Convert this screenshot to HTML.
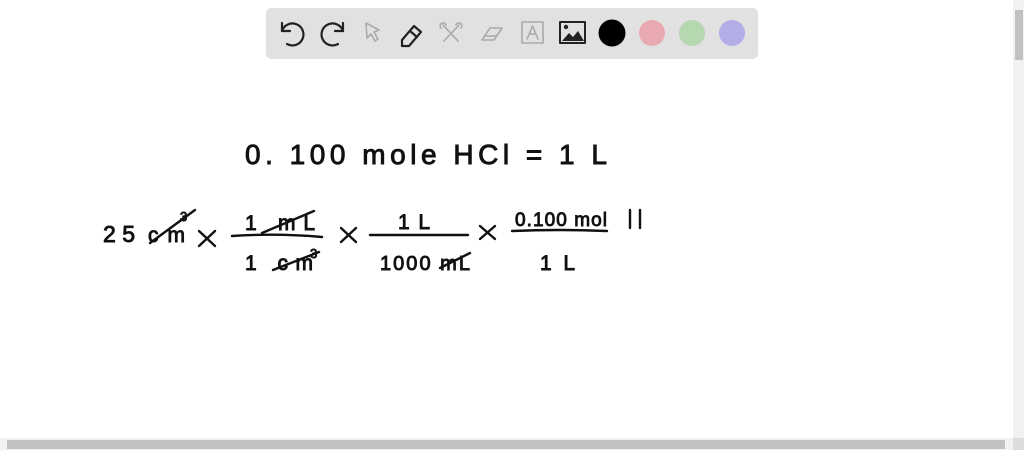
<!DOCTYPE html>
<html><head><meta charset="utf-8"><style>
html,body{margin:0;padding:0;width:1024px;height:450px;overflow:hidden;background:#fff;position:relative}
.tb{position:absolute;left:266px;top:8px;width:492px;height:51px;background:#e1e1e1;border-radius:5px}
.vs{position:absolute;left:1013px;top:0;width:11px;height:438px;background:#f1f1f1}
.vt{position:absolute;left:1015px;top:10px;width:8px;height:50px;background:#c1c1c1}
.hs{position:absolute;left:0;top:438px;width:1013px;height:12px;background:#f1f1f1}
.ht{position:absolute;left:7px;top:440px;width:998px;height:9px;background:#c1c1c1}
.cr{position:absolute;left:1013px;top:438px;width:11px;height:12px;background:#dcdcdc}
svg{position:absolute;left:0;top:0}
</style></head><body>
<div class="tb"></div>
<div class="vs"></div><div class="vt"></div>
<div class="hs"></div><div class="ht"></div><div class="cr"></div>
<svg width="1024" height="450" viewBox="0 0 1024 450">
<g fill="none" stroke="#222" stroke-width="2.2" stroke-linecap="round" stroke-linejoin="round">
 <path d="M282 23 v8 h8"/><path d="M282 31 A11 11 0 1 1 287 44"/>
 <path d="M343 23 v8 h-8"/><path d="M343 31 A11 11 0 1 0 338 44"/>
 <path d="M402 40 l12 -14 l7 6 l-12 14 h-7 z"/><path d="M410 31 l7 6"/>
 <rect x="560" y="22" width="25" height="21" stroke-width="2"/>
</g>
<path d="M562 41 l7 -8 l4 4 l5 -6 l6 10 z" fill="#222"/><circle cx="566" cy="27" r="2.2" fill="#222"/>
<g fill="none" stroke="#aaa" stroke-width="1.6" stroke-linecap="round" stroke-linejoin="round">
 <path d="M366 23 l13 7 l-5 2 l4 7 l-3 2 l-4 -7 l-4 4 z"/>
 <path d="M443 25 l15 16 M459 25 l-15 16 M441 28 a3 3 0 1 1 5 -3 M461 28 a3 3 0 1 0 -5 -3"/>
 <path d="M482 40 l8 -12 h12 l-8 12 z M485 36 h12"/>
 <rect x="522" y="22" width="21" height="21"/><path d="M527 39 l5.5 -13 l5.5 13 M529 34 h7"/>
</g>
<circle cx="612" cy="33" r="13.5" fill="#000"/>
<circle cx="652" cy="33" r="13" fill="#e8a9b1"/>
<circle cx="692" cy="33" r="13" fill="#b6d8b1"/>
<circle cx="732" cy="33" r="13" fill="#b3aee8"/>
<g font-family="Liberation Sans, sans-serif" fill="#111" stroke="#111" stroke-width="0.9" lengthAdjust="spacing">
 <text x="245" y="164" font-size="28" textLength="362">0. 100 mole HCl  =  1  L</text>
 <text x="103" y="242" font-size="23" textLength="32">25</text>
 <text x="148" y="242" font-size="21" textLength="37">cm</text>
 <text x="180" y="221" font-size="13">3</text>
 <text x="245" y="230" font-size="21" textLength="70">1 mL</text>
 <text x="245" y="270" font-size="21" textLength="68">1 cm</text>
 <text x="310" y="258" font-size="13">3</text>
 <text x="398" y="229" font-size="21" textLength="32">1 L</text>
 <text x="380" y="270" font-size="20" textLength="90">1000 mL</text>
 <text x="515" y="226" font-size="19" textLength="92">0.100 mol</text>
 <text x="540" y="270" font-size="21" textLength="35">1 L</text>
</g>
<g fill="none" stroke="#111" stroke-width="2.4" stroke-linecap="round">
 <path d="M150 243 l45 -33"/>
 <path d="M199 231 l16 15 M215 231 l-16 15"/>
 <path d="M232 236 q45 -3 90 1"/>
 <path d="M262 233 l52 -22"/>
 <path d="M273 270 l46 -18"/>
 <path d="M341 228 l15 14 M356 228 l-15 14"/>
 <path d="M370 235 h98"/>
 <path d="M440 268 l30 -15"/>
 <path d="M480 226 l15 13 M495 226 l-15 13"/>
 <path d="M512 231 q47 -2 95 0"/>
 <path d="M630 210 v18 M640 210 v18"/>
</g>
</svg>
</body></html>
